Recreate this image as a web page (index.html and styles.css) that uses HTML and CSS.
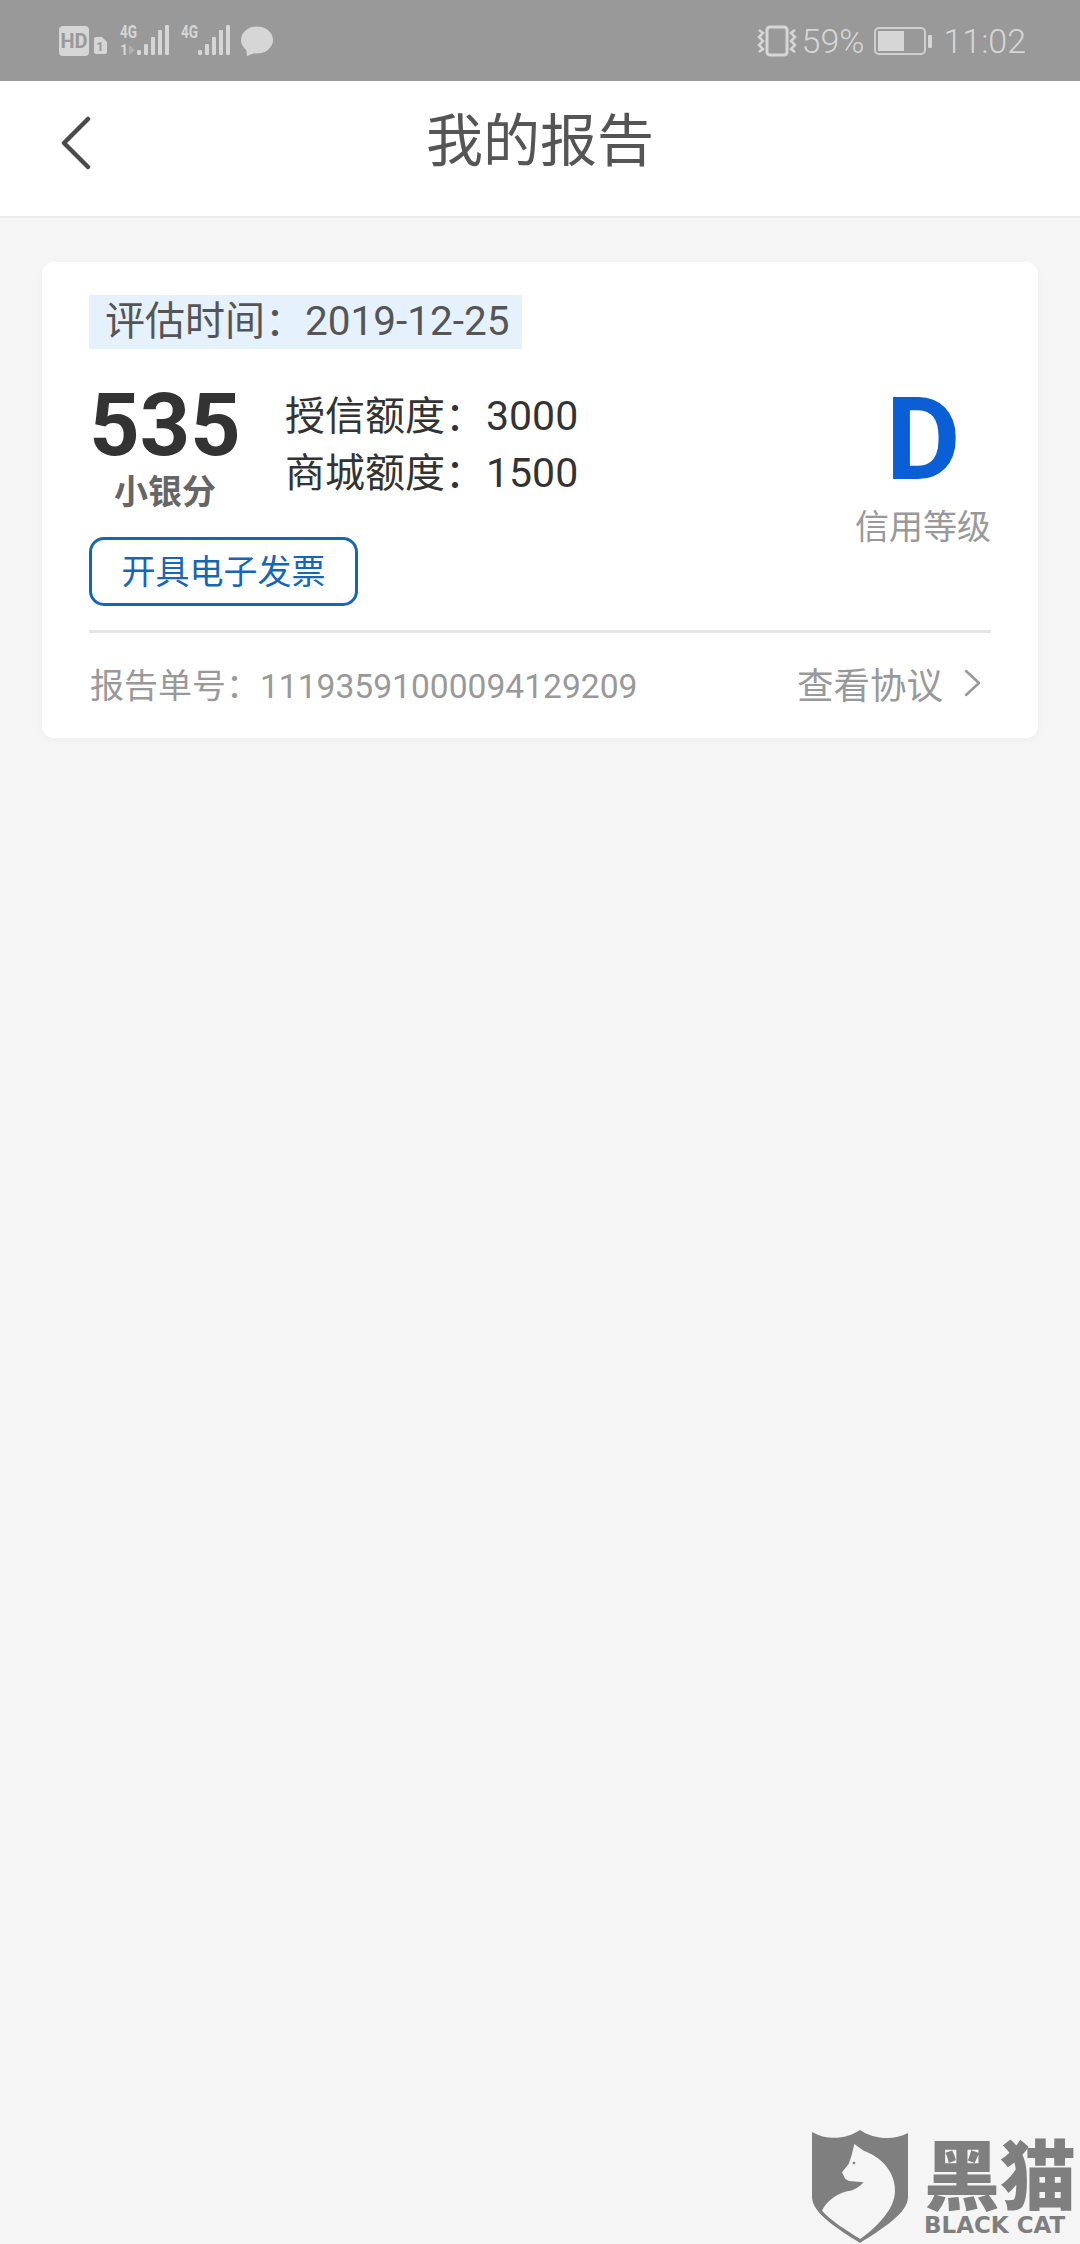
FILE: index.html
```html
<!DOCTYPE html>
<html lang="zh-CN">
<head>
    <meta charset="UTF-8">
    <meta name="viewport" content="width=device-width, initial-scale=1.0">
    <title>我的报告</title>
    <link rel="stylesheet" href="styles.css">
</head>
<body>

<!-- Status bar -->
<div class="status-bar">
    <svg class="status-left" width="220" height="81" viewBox="55 0 220 81">
        <rect x="59" y="26" width="30" height="30" rx="4" fill="#d6d6d6"/>
        <text x="74" y="48" class="hd-text">HD</text>
        <path d="M94 39a2 2 0 0 1 2-2h6l5 5v10a2 2 0 0 1-2 2h-9a2 2 0 0 1-2-2z" fill="#d6d6d6"/>
        <text x="100" y="51" class="sim-text">1</text>
        <text x="120" y="38" class="net-text" textLength="17" lengthAdjust="spacingAndGlyphs">4G</text>
        <text x="120" y="55" class="net-one">1</text>
        <path d="M129 45l6 5-6 5z" fill="#b0b0b0"/>
        <g fill="#d6d6d6">
            <rect x="137" y="50" width="4" height="5" rx="1"/>
            <rect x="144" y="44" width="4" height="11" rx="1"/>
            <rect x="151" y="37" width="4" height="18" rx="1"/>
            <rect x="158" y="30" width="4" height="25" rx="1"/>
            <rect x="165" y="25" width="4" height="30" rx="1"/>
        </g>
        <text x="181" y="38" class="net-text" textLength="17" lengthAdjust="spacingAndGlyphs">4G</text>
        <g fill="#d6d6d6">
            <rect x="198" y="50" width="4" height="5" rx="1"/>
            <rect x="205" y="44" width="4" height="11" rx="1"/>
            <rect x="212" y="37" width="4" height="18" rx="1"/>
            <rect x="219" y="30" width="4" height="25" rx="1"/>
            <rect x="226" y="25" width="4" height="30" rx="1"/>
        </g>
        <ellipse cx="257" cy="40" rx="16" ry="13.5" fill="#d6d6d6"/>
        <path d="M246 48l1 8 10-4z" fill="#d6d6d6"/>
    </svg>
    <div class="status-right">
        <svg width="42" height="32" viewBox="0 0 42 32" fill="none" stroke="#d6d6d6" stroke-width="2.5">
            <rect x="11" y="2" width="20" height="28" rx="3" stroke-width="3"/>
            <path d="M3 5l4 3-4 4 4 4-4 4 4 4-4 3"/>
            <path d="M39 5l-4 3 4 4-4 4 4 4-4 4 4 3"/>
        </svg>
        <span class="status-pct">59%</span>
        <svg width="59" height="28" viewBox="0 0 59 28">
            <rect x="1" y="1" width="50" height="26" rx="4" fill="none" stroke="#d0d0d0" stroke-width="2"/>
            <rect x="4" y="4" width="26" height="20" fill="#d6d6d6"/>
            <rect x="54" y="8" width="4" height="13" rx="1" fill="#d6d6d6"/>
        </svg>
        <span class="status-time">11:02</span>
    </div>
</div>

<!-- Header -->
<div class="top-bar">
    <svg class="back-icon" width="32" height="54" viewBox="0 0 32 54" fill="none" stroke="#4a4a4a" stroke-width="4.5" stroke-linecap="round" stroke-linejoin="round">
        <path d="M28 3L4 27l24 24"/>
    </svg>
    <h1>我的报告</h1>
</div>

<!-- Report card -->
<div class="card">
    <div class="date-tag">评估时间：<span class="num">2019-12-25</span></div>

    <div class="card-main">
        <div class="card-left">
            <div class="score-row">
                <div class="score">
                    <div class="score-num">535</div>
                    <div class="score-label">小银分</div>
                </div>
                <div class="quota">
                    <p>授信额度：<span class="num">3000</span></p>
                    <p>商城额度：<span class="num">1500</span></p>
                </div>
            </div>
            <button type="button" class="invoice-btn">开具电子发票</button>
        </div>
        <div class="grade">
            <div class="grade-letter">D</div>
            <div class="grade-label">信用等级</div>
        </div>
    </div>

    <div class="card-footer">
        <span class="report-no">报告单号：<span class="report-digits">11193591000094129209</span></span>
        <span class="agreement">查看协议
            <svg width="18" height="28" viewBox="0 0 18 28" fill="none" stroke="#999" stroke-width="2.5" stroke-linecap="round" stroke-linejoin="round">
                <path d="M3 2l13 12L3 26"/>
            </svg>
        </span>
    </div>
</div>

<!-- Watermark -->
<div class="watermark">
    <svg width="98" height="115" viewBox="0 0 98 115">
        <path d="M1 3C16 12 36 10 49 1c13 9 33 11 48 3v64c0 16-26 32-48 46C27 100 1 84 1 68z" fill="#7f7f7f"/>
        <path d="M43.3 15l9.4 6.7C70 28 84 42 84 62c0 18-18 36-34.700 48C35 101 20 92 11 81.700 15 72 28 63 39.300 61.700c6.700-1.700 10.700-5.700 13.400-8.400L38 52l-3.700-2L31 43.300 37.700 35 41 25z" fill="#f5f5f5"/>
        <circle cx="43" cy="34" r="1.300" fill="#7f7f7f"/>
    </svg>
    <div class="wm-text">
        <div class="wm-cn">黑猫</div>
        <div class="wm-en">BLACK CAT</div>
    </div>
</div>

</body>
</html>
```

FILE: styles.css
```css
html, body {
    height: 100%;
}

body {
    margin: 0;
    background-color: #f5f5f5;
    font-family: Roboto, "Noto Sans CJK SC", sans-serif;
    overflow: hidden;
    position: relative;
}

.status-bar {
    height: 81px;
    background-color: #999;
    display: flex;
    justify-content: space-between;
    align-items: center;
    padding-right: 54px;
    color: #d6d6d6;
}

.status-left {
    margin-left: 55px;
}

.hd-text {
    font: bold 20px Roboto, sans-serif;
    fill: #999;
    text-anchor: middle;
}

.sim-text {
    font: bold 13px Roboto, sans-serif;
    fill: #999;
    text-anchor: middle;
}

.net-text {
    font: bold 19px Roboto, sans-serif;
    fill: #d6d6d6;
}

.net-one {
    font: bold 14px Roboto, sans-serif;
    fill: #d6d6d6;
}

.status-right {
    display: flex;
    align-items: center;
}

.status-pct {
    font-size: 34px;
    font-weight: 300;
    margin: 0 10px 0 4px;
}

.status-time {
    font-size: 34px;
    font-weight: 300;
    margin-left: 10px;
}

.top-bar {
    height: 135px;
    background: #fff;
    border-bottom: 2px solid #ececec;
    display: flex;
    align-items: center;
    justify-content: center;
    position: relative;
}

.top-bar h1 {
    margin: 0;
    padding-bottom: 25px;
    font-size: 57px;
    font-weight: 400;
    color: #555;
}

.back-icon {
    position: absolute;
    left: 60px;
    top: 35px;
}

.card {
    margin: 44px 42px 0 42px;
    height: 476px;
    box-sizing: border-box;
    padding: 33px 47px 0 47px;
    background: #fff;
    border-radius: 12px;
    box-shadow: 0 2px 8px rgba(0, 0, 0, 0.03);
}

.date-tag {
    display: inline-block;
    height: 54px;
    line-height: 52px;
    padding: 0 13px 0 16px;
    background-color: #e5f1fc;
    font-size: 40px;
    color: #555;
    vertical-align: top;
}

.num {
    font-size: 40.5px;
}

.card-main {
    display: flex;
    justify-content: space-between;
    margin-top: 38px;
    height: 243px;
    border-bottom: 3px solid #e6e6e6;
}

.score-row {
    display: flex;
}

.score {
    width: 152px;
    text-align: center;
}

.score-num {
    font-size: 88px;
    font-weight: 700;
    line-height: 76px;
    color: #333;
}

.score-label {
    font-size: 34px;
    font-weight: 700;
    line-height: 40px;
    margin-top: 9px;
    color: #666;
}

.quota {
    margin-left: 44px;
    padding-top: 1px;
}

.quota p {
    margin: 0;
    font-size: 40px;
    line-height: 57px;
    color: #333;
}

.quota .num {
    font-size: 41px;
    margin-left: 1px;
}

.invoice-btn {
    display: block;
    width: 269px;
    height: 69px;
    margin-top: 25px;
    padding: 0 0 5px 0;
    background: #fff;
    border: 3px solid #1565b8;
    border-radius: 15px;
    font-family: "Noto Sans CJK SC", sans-serif;
    font-size: 34px;
    color: #1565b8;
}

.grade {
    text-align: center;
    width: 136px;
}

.grade-letter {
    font-size: 115px;
    font-weight: 700;
    line-height: 100px;
    padding-top: 3px;
    color: #0a5fd6;
}

.grade-label {
    font-size: 34px;
    line-height: 44px;
    margin-top: 15px;
    color: #999;
}

.card-footer {
    display: flex;
    justify-content: space-between;
    align-items: center;
    height: 100px;
    padding-left: 1px;
    color: #999;
}

.report-no {
    font-size: 34px;
}

.report-digits {
    font-size: 33.6px;
}

.agreement {
    display: flex;
    align-items: center;
    font-size: 36.5px;
    gap: 20px;
    margin-right: 10px;
}

.watermark {
    position: absolute;
    left: 811px;
    top: 2129px;
    width: 269px;
    display: flex;
    gap: 15px;
    color: #7f7f7f;
}

.wm-cn {
    font-family: "Noto Sans CJK SC", sans-serif;
    font-size: 76px;
    font-weight: 900;
    line-height: 84px;
    white-space: nowrap;
}

.wm-en {
    font-family: "DejaVu Sans", sans-serif;
    font-size: 23px;
    font-weight: 700;
    line-height: 24px;
    white-space: nowrap;
}
```
